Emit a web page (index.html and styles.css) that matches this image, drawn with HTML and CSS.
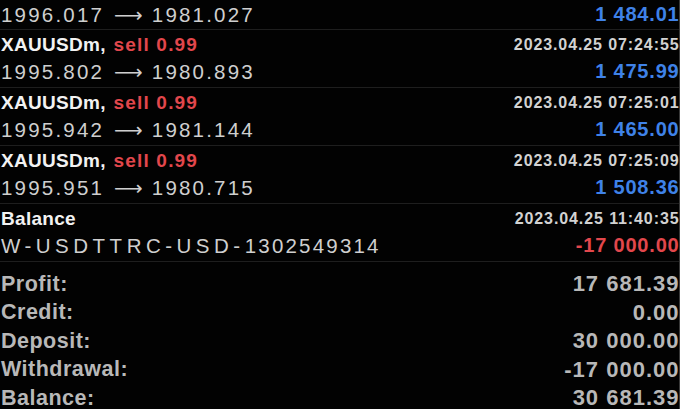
FILE: index.html
```html
<!DOCTYPE html>
<html>
<head>
<meta charset="utf-8">
<link rel="stylesheet" href="styles.css">
</head>
<body>
<div class="screen">
  <div class="deal partial">
    <div class="line">
      <span class="prices">1996.017<span class="arrow">⟶</span>1981.027</span>
      <span class="profit">1 484.01</span>
    </div>
  </div>
  <div class="deal">
    <div class="line">
      <span class="title">XAUUSDm, <span class="sell">sell 0.99</span></span>
      <span class="date">2023.04.25 07:24:55</span>
    </div>
    <div class="line">
      <span class="prices">1995.802<span class="arrow">⟶</span>1980.893</span>
      <span class="profit">1 475.99</span>
    </div>
  </div>
  <div class="deal">
    <div class="line">
      <span class="title">XAUUSDm, <span class="sell">sell 0.99</span></span>
      <span class="date">2023.04.25 07:25:01</span>
    </div>
    <div class="line">
      <span class="prices">1995.942<span class="arrow">⟶</span>1981.144</span>
      <span class="profit">1 465.00</span>
    </div>
  </div>
  <div class="deal">
    <div class="line">
      <span class="title">XAUUSDm, <span class="sell">sell 0.99</span></span>
      <span class="date">2023.04.25 07:25:09</span>
    </div>
    <div class="line">
      <span class="prices">1995.951<span class="arrow">⟶</span>1980.715</span>
      <span class="profit">1 508.36</span>
    </div>
  </div>
  <div class="deal">
    <div class="line">
      <span class="title">Balance</span>
      <span class="date">2023.04.25 11:40:35</span>
    </div>
    <div class="line">
      <span class="prices"><span class="wide">W-USDTTRC-USD-</span>1302549314</span>
      <span class="profit loss">-17 000.00</span>
    </div>
  </div>
  <div class="summary">
    <div class="sum-row"><span class="label">Profit:</span><span class="value">17 681.39</span></div>
    <div class="sum-row"><span class="label">Credit:</span><span class="value">0.00</span></div>
    <div class="sum-row"><span class="label">Deposit:</span><span class="value">30 000.00</span></div>
    <div class="sum-row"><span class="label">Withdrawal:</span><span class="value">-17 000.00</span></div>
    <div class="sum-row"><span class="label">Balance:</span><span class="value">30 681.39</span></div>
  </div>
</div>
</body>
</html>
```
FILE: styles.css
```css
* { box-sizing: border-box; }
html, body {
  margin: 0;
  padding: 0;
  background: #020202;
  height: 100%;
  overflow: hidden;
}
.screen {
  width: 680px;
  height: 409px;
  font-family: "Liberation Sans", Arial, sans-serif;
  border-right: 1px solid #3a3a3a;
  overflow: hidden;
}
.deal {
  height: 58px;
  padding: 1px 0 3px 1px;
  border-bottom: 1px solid #1e1e1e;
}
.deal.partial {
  height: 30px;
  padding-top: 1px;
  padding-bottom: 2px;
}
.line {
  display: flex;
  justify-content: space-between;
  align-items: center;
  height: 27px;
  white-space: nowrap;
}
.title {
  font-weight: bold;
  font-size: 19px;
  color: #f2f2f2;
  letter-spacing: 0.3px;
}
.sell {
  color: #e2474c;
  letter-spacing: 1.2px;
  margin-left: 2px;
}
.date {
  font-weight: bold;
  font-size: 16px;
  color: #d2d2d2;
  letter-spacing: 0.9px;
  margin-right: -0.5px;
}
.prices {
  font-size: 20.5px;
  color: #cfcfcf;
  letter-spacing: 2.2px;
}
.arrow {
  font-family: "DejaVu Sans", sans-serif;
  font-size: 20px;
  letter-spacing: 0;
  margin: 0 9px 0 10px;
}
.wide {
  letter-spacing: 4.5px;
}
.profit {
  font-weight: bold;
  font-size: 20px;
  color: #3f82e8;
  letter-spacing: 0.8px;
  margin-right: -0.5px;
}
.profit.loss {
  color: #e2474c;
}
.summary {
  padding: 8px 0 0 1px;
}
.sum-row {
  display: flex;
  justify-content: space-between;
  align-items: center;
  height: 28.5px;
  font-weight: bold;
  color: #b8b8b8;
}
.label {
  font-size: 21.5px;
  letter-spacing: 0.5px;
}
.value {
  font-size: 22px;
  letter-spacing: 1px;
  margin-right: -0.5px;
}
```
